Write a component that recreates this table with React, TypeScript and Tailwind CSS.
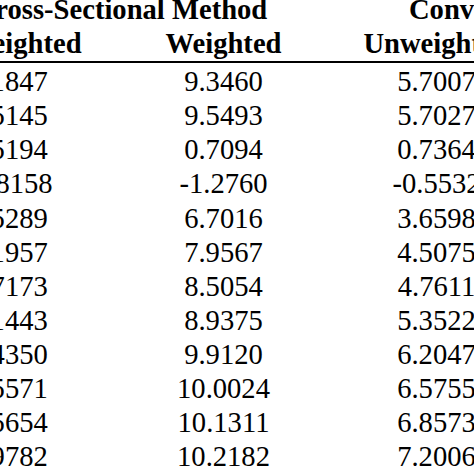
const ROWS: [string, string, string, string][] = [
  ["8.1847", "9.3460", "5.7007", "6.8123"],
  ["8.5145", "9.5493", "5.7027", "6.9012"],
  ["0.5194", "0.7094", "0.7364", "0.8401"],
  ["-0.8158", "-1.2760", "-0.5532", "-0.9011"],
  ["5.5289", "6.7016", "3.6598", "4.5120"],
  ["6.1957", "7.9567", "4.5075", "5.3301"],
  ["6.7173", "8.5054", "4.7611", "5.6120"],
  ["7.1443", "8.9375", "5.3522", "6.0144"],
  ["7.4350", "9.9120", "6.2047", "6.8800"],
  ["7.5571", "10.0024", "6.5755", "7.1103"],
  ["7.5654", "10.1311", "6.8573", "7.3322"],
  ["7.9782", "10.2182", "7.2006", "7.6010"],
];

const COLS = ["w-[215px]", "w-[215px]", "w-[211px]", "w-[219px]"];
const HEADERS = ["Unweighted", "Weighted", "Unweighted", "Weighted"];

const font = { fontFamily: '"Liberation Serif", "Times New Roman", serif' };

export default function App() {
  return (
    <div className="h-[474px] w-[474px] overflow-hidden bg-white text-black" style={font}>
      <div className="-ml-[99px] -mt-[7px] w-[860px] text-[28.6px] leading-[34.1px]">
        {/* group titles */}
        <div className="flex font-bold">
          <div className="w-[430px] pl-[10px] text-center">Cross-Sectional Method</div>
          <div className="w-[430px] pr-[8px] text-center">Conventional Method</div>
        </div>

        {/* column headers */}
        <div className="flex border-b-2 border-black font-bold">
          {HEADERS.map((h, j) => (
            <div key={j} className={`${COLS[j]} text-center`}>
              {h}
            </div>
          ))}
        </div>

        <div className="pt-[2px]">
          {ROWS.map((row, i) => (
            <div key={i} className="flex">
              {row.map((v, j) => (
                <div key={j} className={`${COLS[j]} text-center`}>
                  {v}
                </div>
              ))}
            </div>
          ))}
        </div>
      </div>
    </div>
  );
}
